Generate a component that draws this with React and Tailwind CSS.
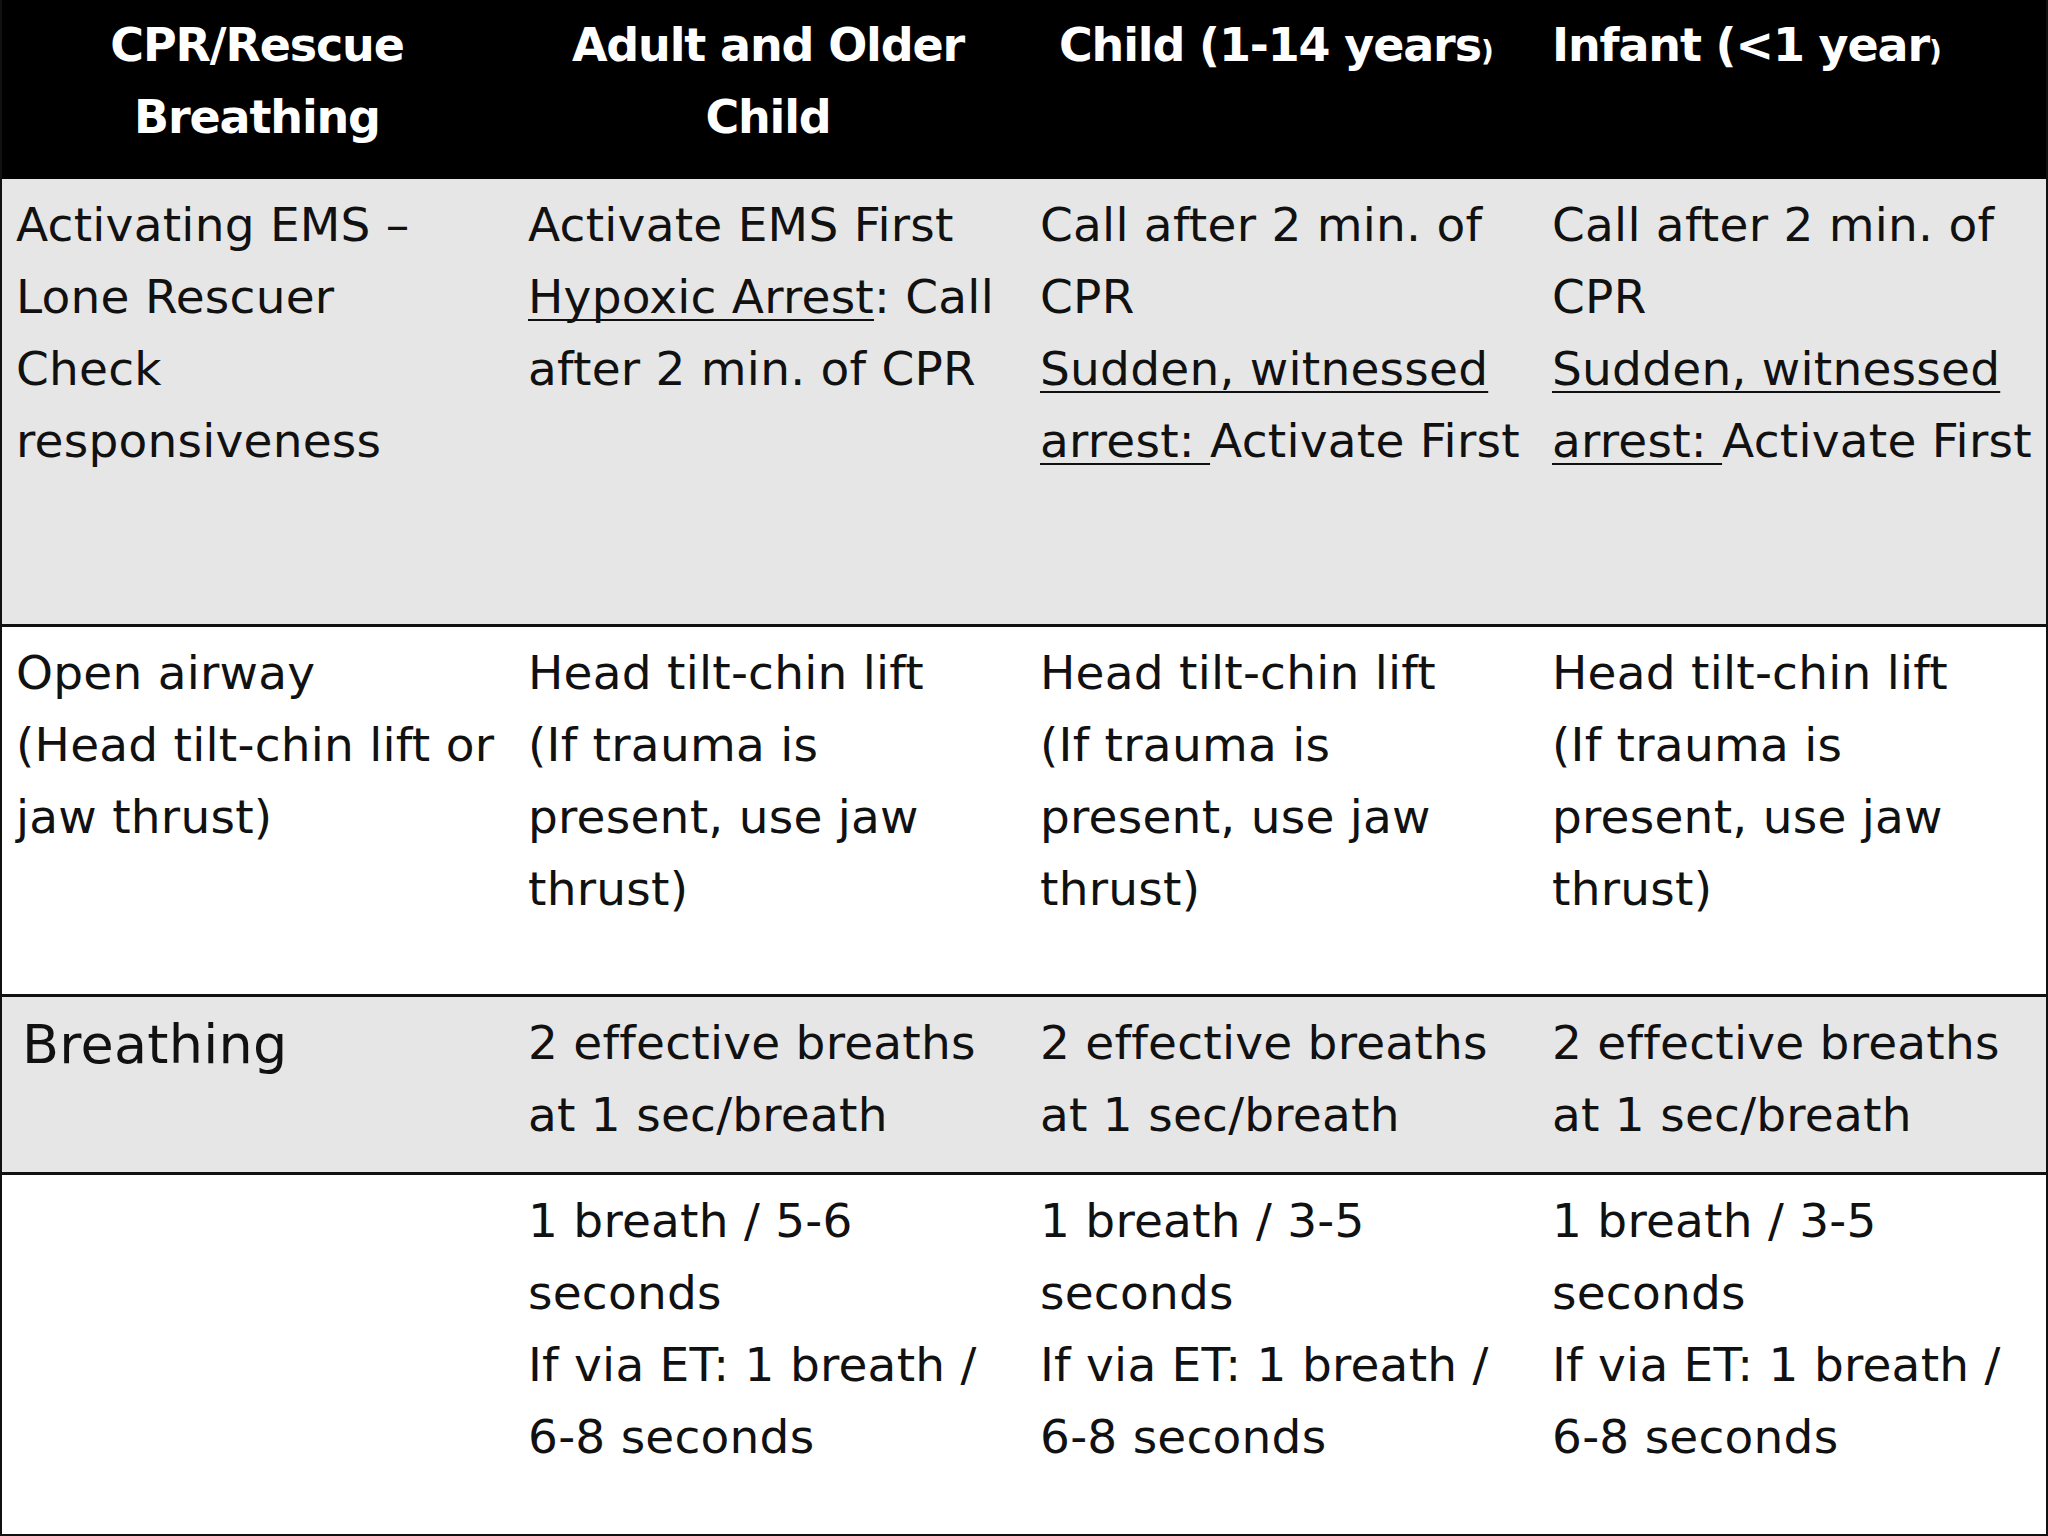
const rows = [
  {
    height: 'h-[448px]',
    bg: 'bg-[#e6e6e6]',
    border: 'border-b-[3px]',
    label: ['Activating EMS –', 'Lone Rescuer', 'Check', 'responsiveness'],
    cells: [
      ['Activate EMS First', <><U>Hypoxic Arrest</U>: Call</>, 'after 2 min. of CPR'],
      ['Call after 2 min. of', 'CPR', <U>Sudden, witnessed</U>, <><U>arrest: </U>Activate First</>],
      ['Call after 2 min. of', 'CPR', <U>Sudden, witnessed</U>, <><U>arrest: </U>Activate First</>],
    ],
  },
  {
    height: 'h-[370px]',
    bg: 'bg-white',
    border: 'border-b-[3px]',
    label: ['Open airway', '(Head tilt-chin lift or', 'jaw thrust)'],
    cells: [
      ['Head tilt-chin lift', '(If trauma is', 'present, use jaw', 'thrust)'],
      ['Head tilt-chin lift', '(If trauma is', 'present, use jaw', 'thrust)'],
      ['Head tilt-chin lift', '(If trauma is', 'present, use jaw', 'thrust)'],
    ],
  },
  {
    height: 'h-[178px]',
    bg: 'bg-[#e6e6e6]',
    border: 'border-b-[3px]',
    big: true,
    label: ['Breathing'],
    cells: [
      ['2 effective breaths', 'at 1 sec/breath'],
      ['2 effective breaths', 'at 1 sec/breath'],
      ['2 effective breaths', 'at 1 sec/breath'],
    ],
  },
  {
    height: 'h-[361px]',
    bg: 'bg-white',
    border: 'border-b-2',
    label: [],
    cells: [
      ['1 breath / 5-6', 'seconds', 'If via ET: 1 breath /', '6-8 seconds'],
      ['1 breath / 3-5', 'seconds', 'If via ET: 1 breath /', '6-8 seconds'],
      ['1 breath / 3-5', 'seconds', 'If via ET: 1 breath /', '6-8 seconds'],
    ],
  },
]

function U({ children }) {
  return (
    <span className="underline decoration-2 underline-offset-[6px] [text-decoration-skip-ink:none]">
      {children}
    </span>
  )
}

function Lines({ lines }) {
  return lines.map((line, index) => (
    <div key={index} className="whitespace-pre">
      {line}
    </div>
  ))
}

export default function App() {
  return (
    <div
      className="w-[2048px] h-[1536px] overflow-hidden border-x-2 border-[#111] bg-white text-[#111]"
      style={{ fontFamily: '"DejaVu Sans", sans-serif' }}
    >
      <div className="grid h-[179px] grid-cols-[510px_512px_512px_1fr] bg-black pt-[9px] text-[46px] font-bold leading-[72px] tracking-[-0.025em] text-white">
        <div className="text-center">
          <div>CPR/Rescue</div>
          <div>Breathing</div>
        </div>
        <div className="text-center">
          <div>Adult and Older</div>
          <div>Child</div>
        </div>
        <div className="pl-[35px]">
          Child (1-14 years<span className="text-[28px]">)</span>
        </div>
        <div className="pl-4">
          Infant (&lt;1 year<span className="text-[28px]">)</span>
        </div>
      </div>

      {rows.map((row, rowIndex) => (
        <div
          key={rowIndex}
          className={`grid grid-cols-[510px_512px_512px_1fr] border-[#111] text-[47px] leading-[72px] tracking-[0.005em] ${row.height} ${row.bg} ${row.border}`}
        >
          <div className={row.big ? 'pl-[20px] pt-[12px] text-[54px]' : 'pl-[14px] pt-[10px]'}>
            <Lines lines={row.label} />
          </div>
          {row.cells.map((cell, cellIndex) => (
            <div key={cellIndex} className="pl-4 pt-[10px]">
              <Lines lines={cell} />
            </div>
          ))}
        </div>
      ))}
    </div>
  )
}
